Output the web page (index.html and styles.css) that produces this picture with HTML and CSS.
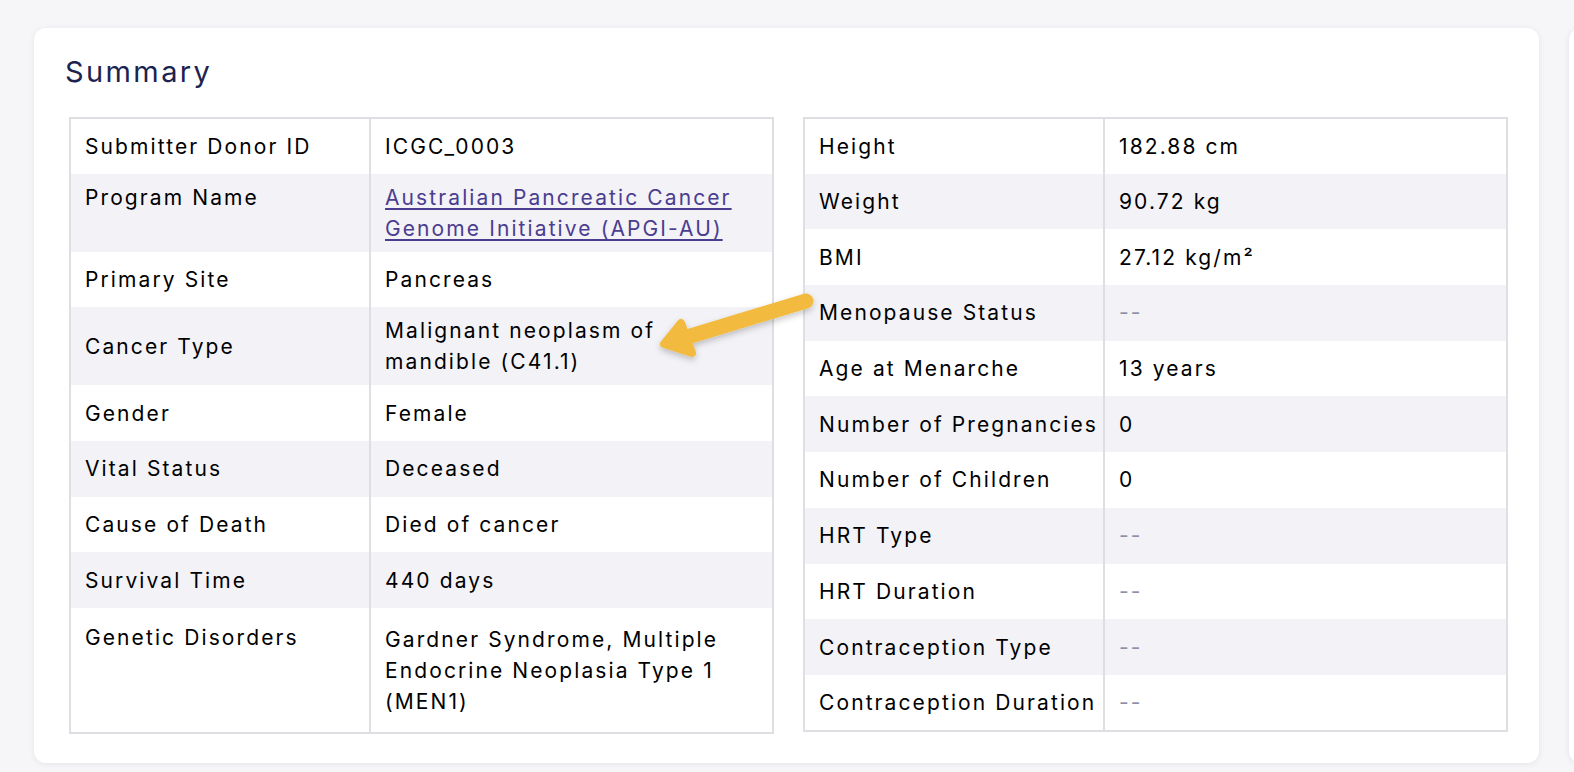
FILE: index.html
```html
<!DOCTYPE html>
<html lang="en">
<head>
<meta charset="utf-8">
<title>Summary</title>
<link rel="stylesheet" href="styles.css">
</head>
<body>
<div class="page">
  <section class="card">
    <h2 class="card-title">Summary</h2>
    <div class="tables">
      <table class="kv">
        <tr><td class="k">Submitter Donor ID</td><td class="v">ICGC_0003</td></tr>
        <tr class="alt two top"><td class="k">Program Name</td><td class="v"><a href="#" class="link">Australian Pancreatic Cancer Genome Initiative (APGI-AU)</a></td></tr>
        <tr><td class="k">Primary Site</td><td class="v">Pancreas</td></tr>
        <tr class="alt two"><td class="k">Cancer Type</td><td class="v">Malignant neoplasm of mandible (C41.1)</td></tr>
        <tr><td class="k">Gender</td><td class="v">Female</td></tr>
        <tr class="alt"><td class="k">Vital Status</td><td class="v">Deceased</td></tr>
        <tr><td class="k">Cause of Death</td><td class="v">Died of cancer</td></tr>
        <tr class="alt"><td class="k">Survival Time</td><td class="v">440 days</td></tr>
        <tr class="three top"><td class="k">Genetic Disorders</td><td class="v">Gardner Syndrome, Multiple Endocrine Neoplasia Type 1 (MEN1)</td></tr>
      </table>
      <table class="kv">
        <tr><td class="k">Height</td><td class="v">182.88 cm</td></tr>
        <tr class="alt"><td class="k">Weight</td><td class="v">90.72 kg</td></tr>
        <tr><td class="k">BMI</td><td class="v">27.12 kg/m²</td></tr>
        <tr class="alt"><td class="k">Menopause Status</td><td class="v empty">--</td></tr>
        <tr><td class="k">Age at Menarche</td><td class="v">13 years</td></tr>
        <tr class="alt"><td class="k">Number of Pregnancies</td><td class="v">0</td></tr>
        <tr><td class="k">Number of Children</td><td class="v">0</td></tr>
        <tr class="alt"><td class="k">HRT Type</td><td class="v empty">--</td></tr>
        <tr><td class="k">HRT Duration</td><td class="v empty">--</td></tr>
        <tr class="alt"><td class="k">Contraception Type</td><td class="v empty">--</td></tr>
        <tr><td class="k">Contraception Duration</td><td class="v empty">--</td></tr>
      </table>
    </div>
  </section>
  <section class="card card-next"></section>
</div>
<svg class="arrow" width="200" height="100" viewBox="640 280 200 100" aria-hidden="true">
  <defs>
    <filter id="sh" x="-20%" y="-40%" width="140%" height="180%">
      <feDropShadow dx="0" dy="3" stdDeviation="3" flood-color="#000" flood-opacity="0.22"/>
    </filter>
  </defs>
  <g filter="url(#sh)" fill="#f2bb3f" stroke="#f2bb3f" stroke-linecap="round" stroke-linejoin="round">
    <line x1="806" y1="301" x2="684" y2="338" stroke-width="15"/>
    <polygon points="664,344 681,323 692,353" stroke-width="8"/>
  </g>
</svg>
</body>
</html>
```
FILE: styles.css
```css
html, body {
  margin: 0;
  padding: 0;
}
body {
  background: #f6f6f8;
  font-family: Inter, "Noto Sans", sans-serif;
  color: #000;
  width: 1574px;
  height: 772px;
  overflow: hidden;
  position: relative;
}
.page {
  display: flex;
  gap: 30px;
  padding: 28px 0 0 34px;
}
.card {
  flex: 0 0 auto;
  width: 1505px;
  height: 735px;
  box-sizing: border-box;
  background: #fff;
  border-radius: 12px;
  box-shadow: 0 1px 6px rgba(20, 20, 60, 0.08);
  padding: 26px 32px 0 35px;
}
.card-next {
  width: 400px;
  padding: 0;
}
.card-title {
  margin: 0 0 27px -4px;
  font-size: 29px;
  line-height: 36px;
  font-weight: 400;
  color: #1c2351;
  letter-spacing: 2.4px;
}
.tables {
  display: flex;
  align-items: flex-start;
  gap: 29px;
}
.kv {
  flex: 0 0 auto;
  width: 705px;
  border-collapse: collapse;
  border: 2px solid #dedee3;
  font-size: 21px;
  line-height: 31px;
  letter-spacing: 2.1px;
  table-layout: fixed;
}
.kv td {
  height: 55.7px;
  box-sizing: border-box;
  padding: 0 16px;
  vertical-align: middle;
}
.kv td.k {
  width: 300px;
  padding-left: 14px;
  padding-right: 2px;
  white-space: nowrap;
  border-right: 2px solid #dedee3;
}
.kv td.v {
  padding-left: 14px;
  padding-right: 24px;
}
.kv tr.alt td {
  background: #f2f2f7;
}
.kv tr.two td {
  padding-top: 8px;
  padding-bottom: 8px;
}
.kv tr.three td {
  padding-top: 14px;
  padding-bottom: 15px;
}
.kv tr.top td.k {
  vertical-align: top;
}
.kv tr.three td.v {
  padding-top: 16px;
}
.link {
  color: #4b3d8f;
  text-decoration: underline;
  text-underline-offset: 3px;
}
.empty {
  color: #8b90a8;
}
.arrow {
  position: absolute;
  left: 640px;
  top: 280px;
}
```
